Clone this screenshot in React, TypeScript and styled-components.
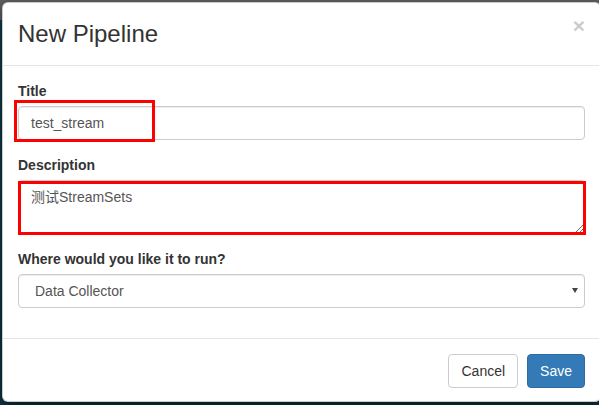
import React from "react";
import styled, { createGlobalStyle } from "styled-components";

const GlobalStyle = createGlobalStyle`
  html, body {
    margin: 0;
    padding: 0;
  }
  body {
    width: 599px;
    height: 405px;
    overflow: hidden;
    background: linear-gradient(to bottom, #5e5e5e 0, #5e5e5e 20px, #0e3a49 20px, #0c3340 100%);
    font-family: "Liberation Sans", "Noto Sans CJK SC", Arial, sans-serif;
    font-size: 14px;
    line-height: 1.42857;
    color: #333;
  }
  * { box-sizing: border-box; }
`;

const Page = styled.div`
  padding: 2px 0 0 2px;
`;

const Modal = styled.div`
  width: 599px;
  background: #fff;
  border: 1px solid rgba(0, 0, 0, 0.2);
  border-radius: 6px;
  box-shadow: 0 3px 9px rgba(0, 0, 0, 0.5);
`;

const Header = styled.div`
  display: flex;
  justify-content: space-between;
  align-items: flex-start;
  padding: 14px 15px 15px;
  border-bottom: 1px solid #e5e5e5;
`;

const Title = styled.h4`
  margin: 0;
  font-size: 24px;
  line-height: 33px;
  font-weight: 400;
  color: #333;
`;

const Close = styled.button`
  margin-top: -2px;
  padding: 0;
  background: none;
  border: 0;
  font-family: "Liberation Sans", Arial, sans-serif;
  font-size: 21px;
  font-weight: 700;
  line-height: 1;
  color: #000;
  opacity: 0.2;
  text-shadow: 0 1px 0 #fff;
  cursor: pointer;
`;

const Body = styled.div`
  padding: 15px;
`;

const FormGroup = styled.div`
  position: relative;
  margin-bottom: 15px;
`;

const Label = styled.label`
  display: block;
  margin-bottom: 5px;
  font-weight: 700;
  font-size: 14px;
  line-height: 20px;
  color: #333;
`;

const fieldCss = `
  display: block;
  width: 100%;
  padding: 6px 12px;
  font-family: "Liberation Sans", "Noto Sans CJK SC", Arial, sans-serif;
  font-size: 14px;
  line-height: 20px;
  color: #555;
  background: #fff;
  border: 1px solid #ccc;
  border-radius: 4px;
  box-shadow: inset 0 1px 1px rgba(0, 0, 0, 0.075);
  outline: none;
  margin: 0;
`;

const Input = styled.input`
  ${fieldCss}
  height: 34px;
`;

const TextArea = styled.textarea`
  ${fieldCss}
  height: 54px;
  resize: vertical;
`;

const SelectWrap = styled.div`
  position: relative;
`;

const Select = styled.select`
  ${fieldCss}
  height: 34px;
  padding-left: 16px;
  appearance: none;
  -webkit-appearance: none;
`;

const Caret = styled.span`
  position: absolute;
  right: 7px;
  top: 14px;
  width: 0;
  height: 0;
  border-left: 3px solid transparent;
  border-right: 3px solid transparent;
  border-top: 5px solid #444;
  pointer-events: none;
`;

const Annotation = styled.div<{ $top: number; $left: number; $width: number; $height: number }>`
  position: absolute;
  top: ${(p) => p.$top}px;
  left: ${(p) => p.$left}px;
  width: ${(p) => p.$width}px;
  height: ${(p) => p.$height}px;
  border: 3px solid #ff0000;
  pointer-events: none;
`;

const Footer = styled.div`
  display: flex;
  justify-content: flex-end;
  gap: 9px;
  padding: 15px 15px 13px;
  border-top: 1px solid #e5e5e5;
`;

const Button = styled.button<{ $primary?: boolean }>`
  padding: 6px 12px;
  font-family: "Liberation Sans", Arial, sans-serif;
  font-size: 14px;
  line-height: 20px;
  border-radius: 4px;
  border: 1px solid ${(p) => (p.$primary ? "#2e6da4" : "#ccc")};
  background: ${(p) => (p.$primary ? "#337ab7" : "#fff")};
  color: ${(p) => (p.$primary ? "#fff" : "#333")};
  cursor: pointer;
`;

export default function App() {
  return (
    <>
      <GlobalStyle />
      <Page>
        <Modal>
          <Header>
            <Title>New Pipeline</Title>
            <Close aria-label="Close">×</Close>
          </Header>
          <Body>
            <FormGroup>
              <Label htmlFor="title">Title</Label>
              <Input id="title" defaultValue="test_stream" />
              <Annotation $top={19} $left={-4} $width={141} $height={42} />
            </FormGroup>
            <FormGroup>
              <Label htmlFor="desc">Description</Label>
              <TextArea id="desc" defaultValue="测试StreamSets" />
              <Annotation $top={26} $left={0} $width={568} $height={54} />
            </FormGroup>
            <FormGroup>
              <Label htmlFor="run">Where would you like it to run?</Label>
              <SelectWrap>
                <Select id="run" defaultValue="dc">
                  <option value="dc">Data Collector</option>
                </Select>
                <Caret />
              </SelectWrap>
            </FormGroup>
          </Body>
          <Footer>
            <Button>Cancel</Button>
            <Button $primary>Save</Button>
          </Footer>
        </Modal>
      </Page>
    </>
  );
}
